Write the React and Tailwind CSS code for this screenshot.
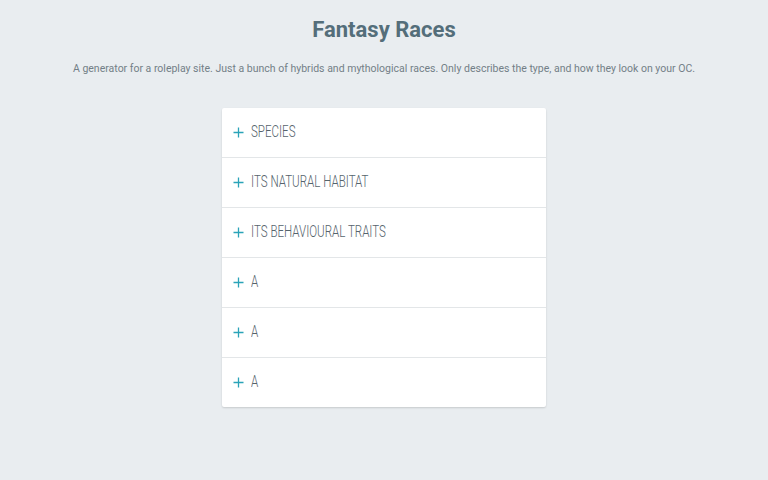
import React, { useState } from "react";

const sections = [
  { id: "species", label: "Species" },
  { id: "habitat", label: "Its natural habitat" },
  { id: "traits", label: "Its behavioural traits" },
  { id: "a1", label: "A" },
  { id: "a2", label: "A" },
  { id: "a3", label: "A" },
];

const PlusIcon = () => (
  <svg width="11" height="11" viewBox="0 0 11 11" className="shrink-0">
    <path d="M5.5 0.5v10M0.5 5.5h10" stroke="#2aa3b8" strokeWidth="1.3" fill="none" />
  </svg>
);

const App = () => {
  const [open, setOpen] = useState(null);

  return (
    <div className="min-h-screen w-full bg-[#e9edf0] font-['Roboto',sans-serif]">
      <div className="flex flex-col items-center pt-[16px]">
        <h1 className="text-[22px] leading-[28px] font-bold text-[#546e7a]">Fantasy Races</h1>
        <p className="mt-[18px] text-[10.5px] leading-[14px] font-normal text-[#737f87]">
          A generator for a roleplay site. Just a bunch of hybrids and mythological races. Only describes the type, and how they look on your OC.
        </p>

        <div className="mt-[32px] w-[324px] bg-white rounded-[2px] shadow-[0_1px_2px_rgba(0,0,0,0.15)]">
          {sections.map((s, i) => (
            <button
              key={s.id}
              onClick={() => setOpen(open === s.id ? null : s.id)}
              className={`w-full flex items-center gap-[7px] pl-[11px] text-left ${
                i > 0 ? "h-[50px] border-t border-[#e3e6e8]" : "h-[49px]"
              }`}
            >
              <PlusIcon />
              <span className="block uppercase text-[16.5px] font-light text-[#55636c] scale-x-[0.7] origin-left whitespace-nowrap">
                {s.label}
              </span>
            </button>
          ))}
        </div>
      </div>
    </div>
  );
};

export default App;
